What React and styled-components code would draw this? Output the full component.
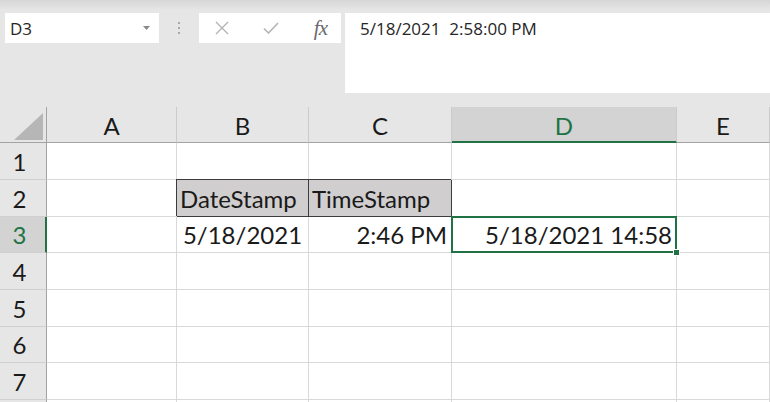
import React from 'react';
import styled, { createGlobalStyle, css } from 'styled-components';

const GlobalStyle = createGlobalStyle`
  html, body {
    margin: 0;
    padding: 0;
    background: #e6e6e6;
  }
`;

const GREEN = '#217346';
const GRID = '#d9d9d9';

const Page = styled.div`
  width: 770px;
  height: 402px;
  overflow: hidden;
  background: #ffffff;
`;

// Top toolbar: name box, grip, cancel/enter/fx buttons, formula bar
const Toolbar = styled.div`
  height: 107px;
  box-sizing: border-box;
  display: flex;
  align-items: flex-start;
  padding: 13px 0 0 5px;
  background: linear-gradient(#d6d6d6 0px, #e6e6e6 10px, #e6e6e6 100%);
  font-family: 'Open Sans', 'Liberation Sans', sans-serif;
`;

const NameBox = styled.div`
  width: 154px;
  height: 30px;
  box-sizing: border-box;
  background: #ffffff;
  display: flex;
  align-items: center;
  justify-content: space-between;
  padding: 0 9px 0 5px;
  font-size: 17px;
  color: #262626;
`;

const Grip = styled.div`
  width: 40px;
  height: 30px;
  display: flex;
  flex-direction: column;
  align-items: center;
  justify-content: center;
  gap: 3px;

  span {
    width: 2px;
    height: 2px;
    background: #a8a8a8;
  }
`;

const FxButtons = styled.div`
  width: 142px;
  height: 30px;
  box-sizing: border-box;
  background: #ffffff;
  display: flex;
  align-items: center;
  padding: 0 14px 0 16px;
  justify-content: space-between;
`;

const FxLabel = styled.span`
  font-family: 'Liberation Serif', 'DejaVu Serif', serif;
  font-style: italic;
  font-size: 21px;
  line-height: 1;
  color: #6a6a6a;
  letter-spacing: -1px;
`;

const FormulaBox = styled.div`
  margin-left: 4px;
  flex: 1;
  height: 80px;
  box-sizing: border-box;
  background: #ffffff;
  padding: 4px 0 0 15px;
  font-size: 17px;
  color: #262626;
  white-space: pre;
`;

// Spreadsheet grid
const Sheet = styled.div`
  display: grid;
  grid-template-columns: 47px 130px 132px 143px 225px 1fr;
  grid-template-rows: 36px 37px 37px 36px 37px 37px 36px 37px 37px;
  font-family: 'Lato', 'Liberation Sans', sans-serif;
  font-size: 24px;
  color: #1a1a1a;
`;

const Cell = styled.div`
  box-sizing: border-box;
  border-right: 1px solid ${GRID};
  border-bottom: 1px solid ${GRID};
  display: flex;
  align-items: center;
  padding: 0 4px;
  white-space: nowrap;
  background: #ffffff;
  justify-content: ${({ $align }) =>
    $align === 'right' ? 'flex-end' : $align === 'center' ? 'center' : 'flex-start'};

  ${({ $boxed }) =>
    $boxed &&
    css`
      background: #d0cece;
      border-right: 1px solid #3c3c3c;
      border-bottom: 1px solid #3c3c3c;
      box-shadow: -1px -1px 0 #3c3c3c;
      padding: 0 3px;
    `}

  ${({ $selected }) =>
    $selected &&
    css`
      position: relative;
      z-index: 2;

      &::after {
        content: '';
        position: absolute;
        top: -1px;
        left: -1px;
        right: -1px;
        bottom: -1px;
        border: 2px solid ${GREEN};
      }

      &::before {
        content: '';
        position: absolute;
        width: 5px;
        height: 5px;
        right: -3px;
        bottom: -3px;
        background: ${GREEN};
        box-shadow: 0 0 0 1px #ffffff;
        z-index: 1;
      }
    `}
`;

const ColHead = styled.div`
  box-sizing: border-box;
  display: flex;
  align-items: center;
  justify-content: center;
  background: ${({ $active }) => ($active ? '#d3d3d3' : '#e6e6e6')};
  border-right: 1px solid #cbcbcb;
  border-bottom: ${({ $active }) => ($active ? `2px solid ${GREEN}` : '1px solid #a3a3a3')};
  color: ${({ $active }) => ($active ? GREEN : '#1a1a1a')};
  padding-top: 2px;
`;

const Corner = styled.div`
  box-sizing: border-box;
  background: #e6e6e6;
  border-right: 1px solid #a3a3a3;
  border-bottom: 1px solid #a3a3a3;
  display: flex;
  align-items: flex-end;
  justify-content: flex-end;
  padding: 0 3px 2px 0;
`;

const RowHead = styled.div`
  box-sizing: border-box;
  display: flex;
  align-items: center;
  justify-content: center;
  background: ${({ $active }) => ($active ? '#d3d3d3' : '#e6e6e6')};
  border-bottom: 1px solid #cfcfcf;
  border-right: ${({ $active }) => ($active ? `2px solid ${GREEN}` : '1px solid #a3a3a3')};
  color: ${({ $active }) => ($active ? GREEN : '#1a1a1a')};
  padding-right: ${({ $active }) => ($active ? '6px' : '7px')};
`;

const columns = ['A', 'B', 'C', 'D', 'E'];

const data = {
  '2-B': { text: 'DateStamp', boxed: true },
  '2-C': { text: 'TimeStamp', boxed: true },
  '3-B': { text: '5/18/2021', align: 'center' },
  '3-C': { text: '2:46 PM', align: 'right' },
  '3-D': { text: '5/18/2021 14:58', align: 'right', selected: true },
};

const Caret = () => (
  <svg width="7" height="4" viewBox="0 0 7 4">
    <path d="M0 0 H7 L3.5 4 Z" fill="#8a8a8a" />
  </svg>
);

const CancelIcon = () => (
  <svg width="14" height="14" viewBox="0 0 14 14">
    <path d="M1 1 L13 13 M13 1 L1 13" stroke="#b4b4b4" strokeWidth="1.4" fill="none" />
  </svg>
);

const EnterIcon = () => (
  <svg width="16" height="12" viewBox="0 0 16 12">
    <path d="M1 6.5 L5.5 11 L15 1" stroke="#b4b4b4" strokeWidth="1.6" fill="none" />
  </svg>
);

const SelectAll = () => (
  <svg width="29" height="27" viewBox="0 0 29 27">
    <path d="M29 0 V27 H0 Z" fill="#b6b6b6" />
  </svg>
);

const App = () => {
  // row 8 only peeks in at the bottom edge, so its number is left out
  const rows = [1, 2, 3, 4, 5, 6, 7, 8];

  return (
    <Page>
      <GlobalStyle />
      <Toolbar>
        <NameBox>
          <span>D3</span>
          <Caret />
        </NameBox>
        <Grip>
          <span />
          <span />
          <span />
        </Grip>
        <FxButtons>
          <CancelIcon />
          <EnterIcon />
          <FxLabel>fx</FxLabel>
        </FxButtons>
        <FormulaBox>5/18/2021  2:58:00 PM</FormulaBox>
      </Toolbar>

      <Sheet>
        <Corner>
          <SelectAll />
        </Corner>
        {columns.map((c) => (
          <ColHead key={c} $active={c === 'D'}>
            {c}
          </ColHead>
        ))}

        {rows.map((r) => (
          <React.Fragment key={r}>
            <RowHead $active={r === 3}>{r < 8 ? r : ''}</RowHead>
            {columns.map((c) => {
              const cell = data[`${r}-${c}`] || {};
              return (
                <Cell
                  key={c}
                  $align={cell.align}
                  $boxed={cell.boxed}
                  $selected={cell.selected}
                >
                  {cell.text}
                </Cell>
              );
            })}
          </React.Fragment>
        ))}
      </Sheet>
    </Page>
  );
};

export default App;
